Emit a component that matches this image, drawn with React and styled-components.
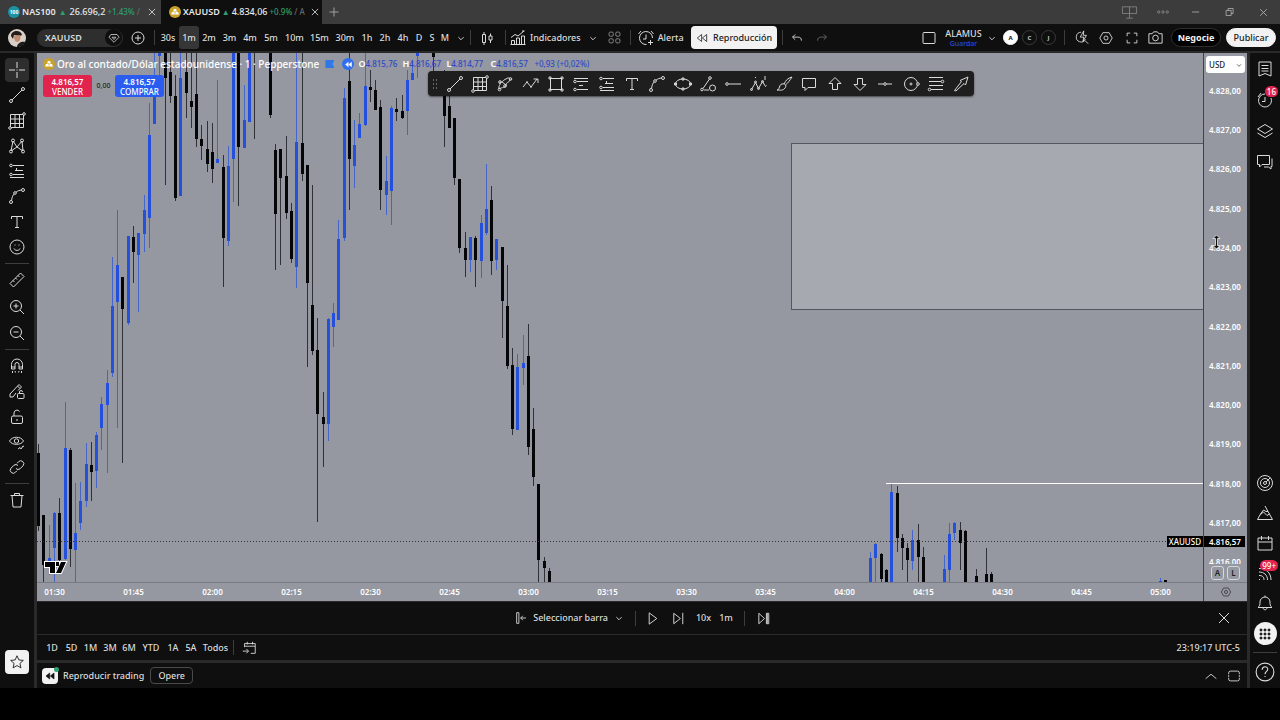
import React from 'react';
import styled, { createGlobalStyle, css } from 'styled-components';

const GlobalStyle = createGlobalStyle`
    * {
        box-sizing: border-box;
    }
    body {
        margin: 0;
        background: #000;
        color: #dbdbdb;
        font: 500 9px/12px "Noto Sans", "Open Sans", sans-serif;
    }
    button, select {
        margin: 0;
        padding: 0;
        border: 0;
        background: none;
        color: inherit;
        font: inherit;
    }
`;

const ICONS = {
    cross: <path d="M9 1v6M9 11v6M1 9h6M11 9h6M8.5 9h1" />,
    line: <><circle cx="3" cy="15" r="1.5" /><circle cx="15" cy="3" r="1.5" /><path d="M4 14L14 4" /></>,
    gann: <><path d="M2.500 2.500h13v13h-13zM7 2.500v13M11.500 2.500v13M2.500 7h13M2.500 11.500h13" /><circle cx="2" cy="16" r="1.300" fill="#0f0f0f" /><circle cx="16" cy="2" r="1.300" fill="#0f0f0f" /></>,
    xabcd: <><path d="M3 14L5 4l4 6 5-6 1 10-6-4-6 4z" /><circle cx="3" cy="14.500" r="1.500" /><circle cx="5" cy="3.500" r="1.500" /><circle cx="14" cy="3.500" r="1.500" /><circle cx="15" cy="14.500" r="1.500" /></>,
    longPos: <><path d="M5 3.500h11M5 12.500h11M2 15.500h14M8.500 8.500V6M7 8.500h8" /><circle cx="3" cy="3.500" r="1.300" /><circle cx="3" cy="12.500" r="1.300" /></>,
    shortPos: <><path d="M2 3.500h14M5 6.500h11M5 14.500h11M7 10.500h4" /><circle cx="3" cy="6.500" r="1.300" /><circle cx="3" cy="14.500" r="1.300" /></>,
    curve: <><circle cx="3" cy="15" r="1.500" /><circle cx="15" cy="3" r="1.500" /><circle cx="7" cy="6" r="1.300" /><path d="M3.500 13.500C4 10 5 8 6.200 7M8 5.200C10 3.700 11.500 3.300 13.500 3" /></>,
    text: <path d="M3.500 6V3.500h11V6M9 3.500v11M7 14.500h4" />,
    smile: <><circle cx="9" cy="9" r="7" /><path d="M6 10.500c1 2.500 5 2.500 6 0M6.500 7h1M10.500 7h1" /></>,
    ruler: <path d="M2 12.500L12.500 2 16 5.500 5.500 16zM5 9.500l1.500 1.500M7.500 7l1.500 1.500M10 4.500L11.500 6" />,
    zoomIn: <><circle cx="8" cy="8" r="5.500" /><path d="M12 12l4 4M8 5.500v5M5.500 8h5" /></>,
    zoomOut: <><circle cx="8" cy="8" r="5.500" /><path d="M12 12l4 4M5.500 8h5" /></>,
    magnet: <path d="M3.500 12V7.500a5.500 5.500 0 0 1 11 0V12h-3.500V7.500a2 2 0 0 0-4 0V12zM3.500 10H7M11 10h3.500M4.500 14v2M13.500 14v2M7 14l.5 1.500M11 14l-.5 1.500" />,
    pencilLock: <><path d="M8 11l-3 4H2v-3L11 2.500 13.500 5 10 8.500M9.500 4L12 6.500M11.500 11.500V10a1.500 1.500 0 0 1 3 0" /><rect x="9.500" y="11.500" width="6.500" height="5" rx="1" /></>,
    lock: <><rect x="3.500" y="8" width="11" height="7.500" rx="1.500" /><path d="M6 8V5a3 3 0 0 1 5.500-1.500M9 11v2" /></>,
    eye: <><path d="M1.500 8C4 3 13 3 15.500 8 13 12.500 4 12.500 1.500 8z" /><circle cx="8.500" cy="8" r="2.200" /><path d="M10 16l2-1.500 1 1.500 2-3 1 .5" /></>,
    link: <path d="M8 10.500a3 3 0 0 0 4 .3l3-3a2.800 2.800 0 0 0-4.500-4L9 5.300M10 7.500a3 3 0 0 0-4-.3l-3 3a2.800 2.800 0 0 0 4.500 4L9 12.700" />,
    trash: <path d="M2.500 4.500h13M6.500 4.500v-2h5v2M4 4.500l1 11.500h8l1-11.500" />,
    star: <path d="M9 2l2.100 4.700 5 .5-3.800 3.400 1.100 5L9 13l-4.400 2.600 1.100-5L1.900 7.200l5-.5z" />,
    shape: <><path d="M3 14c-1-4 2-3 1-7 2 1 3-2 6-3 2-2 5-1 4 1-1 3-4 2-4 5s-4 2-7 4zM6 7l4 3" /><circle cx="3.500" cy="14.500" r="1.300" /><circle cx="4" cy="7" r="1.300" /><circle cx="14.500" cy="4" r="1.300" /><circle cx="9" cy="11" r="1.300" /></>,
    zigzag: <path d="M1 12l4-5 4 5 6-8M11.500 4H16v4M8 12h2M4 7h2" />,
    rect: <><rect x="3.500" y="3.500" width="11" height="11" /><path d="M2 2h2v2H2zM14 2h2v2h-2zM2 14h2v2H2zM14 14h2v2h-2z" /></>,
    ellipse: <><ellipse cx="9" cy="9" rx="7.500" ry="5" /><path d="M8 3h2v2H8zM8 13h2v2H8zM.500 8h2v2h-2zM15.500 8h2v2h-2z" /></>,
    lineShape: <><circle cx="3" cy="14.500" r="1.300" /><circle cx="11" cy="3" r="1.300" /><path d="M4 13.500L10.500 4M5 15h5" /><circle cx="13.500" cy="13" r="3" /></>,
    ray: <><circle cx="3" cy="9" r="1.300" /><path d="M4.500 9H17" /></>,
    elliott: <><path d="M1.500 14.500l4-7 3 6 4-7 3 5 1-1M5 2.500h1M14 2h2M14 4h2" /><circle cx="1.500" cy="14.500" r="1" /><circle cx="5.500" cy="7" r="1" /><circle cx="8.500" cy="13.500" r="1" /><circle cx="12.500" cy="6.500" r="1" /></>,
    brush: <path d="M2 15c3 0 2-6 5-6 3-1 5 2 3 4-2 3-5 2-8 2zM9 9c2-4 4-6 8-7-2 3-4 6-6.500 8" />,
    note: <path d="M2.500 3.500h13v9H8l-3 3v-3H2.500z" />,
    arrowUp: <path d="M9 2.500L3 8.500h3.500v6h5v-6H15z" />,
    arrowDown: <path d="M9 15.500L3 9.500h3.500v-6h5v6H15z" />,
    hline: <><path d="M2 9h5.500M10.500 9H16" /><circle cx="9" cy="9" r="1.300" /></>,
    target: <><circle cx="9" cy="9" r="6.500" /><circle cx="9" cy="9" r="1" /><circle cx="16" cy="9" r="1.300" fill="#1e1e1e" /></>,
    fib: <><path d="M2 2.500h14M2 6.500h12M2 10.500h14M4 14.500h12" /><circle cx="15.500" cy="6.500" r="1.300" /><circle cx="2.500" cy="14.500" r="1.300" /></>,
    arrow: <path d="M2.500 15.500l7-9-1.500-1L16 2l-2.500 8-1.500-1.500-8 7.500z" />,
    plusCircle: <><circle cx="9" cy="9" r="6" /><path d="M9 6v6M6 9h6" /></>,
    plus: <path d="M9 4.500v9M4.500 9h9" />,
    close: <path d="M5 5l8 8M13 5l-8 8" />,
    bigClose: <path d="M4 4l10 10M14 4L4 14" />,
    chevron: <path d="M6 8l3 3 3-3" />,
    chevronUp: <path d="M3 12l6-5 6 5" />,
    candles: <path d="M4.500 5.500h3v8h-3zM6 3v2.500M6 13.500V16M11 7h3v4h-3zM12.500 4.500V7M12.500 11v3" />,
    indicators: <path d="M2.500 15.500v-4h3v4M7.500 15.500V9h3v6.500M12.500 15.500V7h3v8.500M1.500 15.500h15M2 8.500l4-3 3 1.500 6-5M13 2h2.500" />,
    quad: <><rect x="2.500" y="2.500" width="5" height="5" rx="1.500" /><rect x="10.500" y="2.500" width="5" height="5" rx="1.500" /><rect x="2.500" y="10.500" width="5" height="5" rx="1.500" /><rect x="10.500" y="10.500" width="5" height="5" rx="1.500" /></>,
    alert: <path d="M15.500 9a6.500 6.500 0 1 0-6 6.500M9 5.500V10H6M1.500 5L4 2M14 2l2.500 3M13.500 11v5M11 13.500h5" />,
    rewind: <path d="M8.500 4.500v9L3 9zM15 4.500v9L9.500 9z" />,
    undo: <path d="M7 5L4 8l3 3M4 8h6c2.500 0 4 1 4 4" />,
    redo: <path d="M11 5l3 3-3 3M14 8H8c-2.500 0-4 1-4 4" />,
    square: <rect x="3" y="3.500" width="12" height="11" rx="1" />,
    quickFind: <path d="M8 2.500a5.500 5.500 0 1 0 5 8M12.500 12l3.500 3.500M11 1L7 8h4l-1 5 4-7h-3.500z" />,
    settings: <><path d="M5.500 3h7L16 9l-3.500 6h-7L2 9z" /><circle cx="9" cy="9" r="2.300" /></>,
    full: <path d="M3.500 7V3.500H7M11 3.500h3.500V7M14.500 11v3.500H11M7 14.500H3.500V11" />,
    camera: <><path d="M2 5h3.500L7 3h4l1.500 2H16v10H2z" /><circle cx="9" cy="9.500" r="3" /></>,
    gem: <path d="M5 4.500h8L15.500 8 9 14.500 2.500 8zM6.500 8L9 11l2.500-3z" />,
    news: <path d="M3 2h12v14l-6-2.500L3 16zM5.500 5.500h7M5.500 8.500h7M5.500 11h7" />,
    clock: <path d="M9 3a6.500 6.500 0 1 0 6 4M9 6v4.500H6M2 6l3-4" />,
    layers: <path d="M9 2.500l7.500 4.500L9 11.500 1.500 7zM1.500 11L9 15.500l7.500-4.500" />,
    chat: <path d="M1.500 2.500h12v9H6l-2.500 2.500v-2.500h-2zM16 5.500v8h-1v2.500L12.500 14H8" />,
    radar: <><circle cx="9" cy="9" r="7.500" /><circle cx="9" cy="9" r="4.500" /><circle cx="9" cy="9" r="1.500" /><path d="M10 8l4.500-4.500" /></>,
    pyramid: <path d="M9 2l3 5.500h-2L7.500 6 4.500 10 1.500 15.500h15L12 7.500M4.500 10.500L7.500 8l3.500 3.500 2.500-1.500" />,
    calendar: <path d="M2 4h14v12H2zM2 8h14M5.500 2v4M12.500 2v4" />,
    feed: <path d="M3 15.500h1M3 11.500c3 0 5 1 5 4.500M3 8c5 0 8.500 3 8.500 8M3 4.500c7 0 12 4 12 11.500" />,
    bell: <path d="M2 13.500c2-1.500 2-3 2-5.500a5 5 0 0 1 10 0c0 2.500 0 4 2 5.500zM7 13.500c0 3 4 3 4 0M9 1.500V3" />,
    apps: <path d="M3.500 3.500h2v2h-2zM8 3.500h2v2H8zM12.500 3.500h2v2h-2zM3.500 8h2v2h-2zM8 8h2v2H8zM12.500 8h2v2h-2zM3.500 12.500h2v2h-2zM8 12.500h2v2H8zM12.500 12.500h2v2h-2z" />,
    help: <><circle cx="9" cy="9" r="8" /><path d="M6.500 7c0-3.500 5-3.500 5-.5 0 2-2.500 2-2.500 4.500M9 12.500v1" /></>,
    selectBar: <path d="M3 3h2.500v12H3zM7.500 9h6M10 6.500L7.500 9l2.500 2.500" />,
    play: <path d="M5.500 3l8 6-8 6z" />,
    step: <path d="M4 3.500l7 5.500-7 5.500zM13.500 3v12" />,
    toEnd: <path d="M3 3.500L9 9l-6 5.500zM11 3.500h2.500v11H11zM12 4v10" />,
    goTo: <path d="M4 8V4h12v11h-5M4 7h12M7 2v3M13 2v3M2 12.500h6M6 10l2.500 2.500L6 15" />,
    monitor: <path d="M1.500 3h15v7h-15zM9 3v12M5.500 15h7" />,
    dots: <><circle cx="3.500" cy="9" r="1.500" /><circle cx="9" cy="9" r="1.500" /><circle cx="14.500" cy="9" r="1.500" /></>,
    minus: <path d="M4 9h9" />,
    restore: <path d="M4 7h6.500v6.500H4zM6.500 7V4.500H13V11h-2.500" />,
    expand: <path d="M3 7V5.500a2 2 0 0 1 2-2h8a2 2 0 0 1 2 2V7M3 11v1.500a2 2 0 0 0 2 2h8a2 2 0 0 0 2-2V11M3 8v2M15 8v2" />,
};

const Svg = styled.svg`
    display: block;
    flex: none;
    fill: ${({ $filled }) => ($filled ? 'currentColor' : 'none')};
    stroke: currentColor;
    stroke-width: 1;
`;

const Icon = ({ name, size = 18, filled }) => (
    <Svg width={size} height={size} viewBox="0 0 18 18" $filled={filled} aria-hidden="true">
        {ICONS[name]}
    </Svg>
);

const Page = styled.div`
    display: flex;
    flex-direction: column;
    min-height: 100vh;
    padding-bottom: 32px;
    background: #000;
`;

const TabBar = styled.header`
    display: flex;
    align-items: center;
    height: 24px;
    background: #3c3c3c;
`;

const Tab = styled.div`
    display: flex;
    align-items: center;
    gap: 2px;
    flex: none;
    width: 161px;
    height: 24px;
    padding: 0 1px 0 8px;
    white-space: nowrap;
    color: #e8e8e8;
    background: ${({ $active }) => ($active ? '#0f0f0f' : 'transparent')};
    button {
        margin-left: auto;
    }
`;

const Ticker = styled.strong`
    font-weight: 600;
`;

const Rise = styled.span`
    width: 10px;
    color: #2f9e72;
    font-size: 8px;
    text-align: center;
`;

const Change = styled.span`
    color: #2f9e72;
    font-size: 8px;
`;

const Faint = styled.span`
    color: #6a6a6a;
    font-size: 8px;
`;

const Coin = styled.span`
    display: grid;
    place-items: center;
    flex: none;
    width: 12px;
    height: 12px;
    border-radius: 50%;
    background: ${({ $color }) => $color};
    color: #fff;
    font-size: 5px;
    font-weight: 700;
`;

const WindowControls = styled.div`
    display: flex;
    align-items: center;
    margin-left: auto;
    color: #b5b5b5;
`;

const IconButton = styled.button`
    position: relative;
    display: grid;
    place-items: center;
    flex: none;
    width: ${({ $w = 18 }) => $w}px;
    height: ${({ $h = 24 }) => $h}px;
    border-radius: 4px;
    color: ${({ $color = 'inherit' }) => $color};
    background: ${({ $active }) => ($active ? '#2e2e2e' : 'transparent')};
`;

const Toolbar = styled.div`
    display: flex;
    align-items: center;
    height: 29px;
    padding: 0 4px 0 8px;
    border-bottom: 2px solid #2a2a2a;
    background: #0f0f0f;
    white-space: nowrap;
`;

const Avatar = styled.svg`
    width: 18px;
    height: 18px;
    margin-right: 11px;
    flex: none;
`;

const SymbolSearch = styled.button`
    display: flex;
    align-items: center;
    justify-content: space-between;
    width: 86px;
    height: 18px;
    padding: 0 1px 0 8px;
    border-radius: 9px;
    background: #2e2e2e;
    font-weight: 600;
`;

const GemBadge = styled.span`
    display: grid;
    place-items: center;
    width: 17px;
    height: 17px;
    border-radius: 50%;
    background: #0f0f0f;
`;

const Divider = styled.span`
    flex: none;
    width: 1px;
    height: 15px;
    margin: 0 ${({ $gap = 3 }) => $gap}px;
    background: #3d3d3d;
`;

const Interval = styled.button`
    width: ${({ $w }) => $w}px;
    height: 23px;
    border-radius: 3px;
    background: ${({ $active }) => ($active ? '#363636' : 'transparent')};
`;

const ToolButton = styled.button`
    display: flex;
    align-items: center;
    gap: 3px;
    height: 22px;
`;

const ReplayButton = styled(ToolButton)`
    justify-content: center;
    gap: 4px;
    width: 86px;
    height: 23px;
    margin-left: 7px;
    border-radius: 4px;
    background: #f2f2f2;
    color: #1a1a1a;
`;

const ToolbarEnd = styled.div`
    display: flex;
    align-items: center;
    margin-left: auto;
`;

const Layout = styled.div`
    width: 39px;
    margin-left: 6px;
    line-height: 11px;
    text-align: center;
    small {
        display: block;
        color: #2448e0;
        font-size: 7px;
        line-height: 9px;
    }
`;

const Initial = styled.button`
    width: 15px;
    height: 15px;
    margin: 0 2px;
    border: 1px solid ${({ $active }) => ($active ? '#fff' : '#3a3a3a')};
    border-radius: 50%;
    background: ${({ $active }) => ($active ? '#fff' : 'transparent')};
    color: ${({ $active }) => ($active ? '#111' : '#ccc')};
    font-size: 6px;
    line-height: 8px;
    font-weight: 700;
`;

const Pill = styled.button`
    width: 50px;
    height: 19px;
    margin-left: 5px;
    border: 1px solid ${({ $light }) => ($light ? '#f2f2f2' : '#2e2e2e')};
    border-radius: 10px;
    background: ${({ $light }) => ($light ? '#f2f2f2' : '#000')};
    color: ${({ $light }) => ($light ? '#222' : '#f2f2f2')};
    font-weight: ${({ $light }) => ($light ? 500 : 700)};
`;

const Body = styled.div`
    display: flex;
    flex: 1;
`;

const rail = css`
    display: flex;
    flex-direction: column;
    align-items: center;
    flex: none;
    background: #0f0f0f;
`;

const LeftRail = styled.nav`
    ${rail}
    width: 37px;
    padding: 5px 0 14px;
    border-right: 3px solid #2a2a2a;
`;

const RightRail = styled.nav`
    ${rail}
    width: 33px;
    padding: 1px 0;
    border-left: 3px solid #2a2a2a;
`;

const ToolGroup = styled.div`
    display: flex;
    flex-direction: column;
    justify-content: space-between;
    flex: none;
    height: ${({ $height }) => $height}px;
`;

const RailRule = styled.hr`
    flex: none;
    width: 24px;
    height: 1px;
    margin: 4px 0;
    border: 0;
    background: #3d3d3d;
`;

const StarButton = styled(IconButton)`
    margin-top: auto;
    background: #f2f2f2;
    color: #1a1a1a;
`;

const Spacer = styled.div`
    flex: 1;
`;

const RoundButton = styled(IconButton)`
    width: 23px;
    height: 23px;
    margin: 4px 0 3px;
    border-radius: 50%;
    background: #f2f2f2;
    color: #1a1a1a;
`;

const Badge = styled.span`
    position: absolute;
    top: 2px;
    right: 2px;
    padding: 0 2px;
    border-radius: 6px;
    background: #e0244e;
    color: #fff;
    font-size: 8px;
    line-height: 11px;
`;

const Main = styled.main`
    display: flex;
    flex-direction: column;
    flex: 1;
    min-width: 0;
`;

const ChartGrid = styled.section`
    display: grid;
    grid-template-columns: minmax(0, 1fr) 44px;
    grid-template-rows: minmax(529px, 1fr) 19px;
    flex: 1;
    background: #9598a1;
    color: #fff;
`;

const Pane = styled.div`
    position: relative;
    overflow: hidden;
`;

const ChartSvg = styled.svg`
    position: absolute;
    display: block;
    width: 100%;
    height: 100%;
    shape-rendering: crispEdges;
`;

const Legend = styled.div`
    position: relative;
    display: flex;
    align-items: center;
    gap: 2px;
    height: 14px;
    margin: 4px 0 0 6px;
    white-space: nowrap;
    font-size: 10px;
`;

const Flag = styled.span`
    width: 9px;
    height: 8px;
    margin: 0 6px 0 4px;
    background: #2f78e8;
    clip-path: polygon(0 0, 100% 0, 80% 50%, 100% 100%, 0 100%);
`;

const ReplayDot = styled.span`
    display: grid;
    place-items: center;
    width: 12px;
    height: 12px;
    margin-right: 2px;
    border-radius: 50%;
    background: #2f6ff0;
`;

const Ohlc = styled.span`
    width: 42px;
    color: #2f49c8;
    font-size: 8px;
    b {
        color: #fff;
        font-size: 9px;
        font-weight: 600;
    }
`;

const Orders = styled.div`
    position: relative;
    display: flex;
    align-items: center;
    margin: 4px 0 0 6px;
    color: #222;
    font-size: 7px;
`;

const OrderButton = styled.button`
    width: 49px;
    height: 22px;
    border-radius: 3px;
    background: ${({ $color }) => $color};
    color: #fff;
    font-size: 8px;
    font-weight: 500;
    line-height: 9px;
    b {
        display: block;
        font-weight: 600;
        font-size: 8px;
        line-height: 10px;
    }
`;

const Spread = styled.span`
    width: 23px;
    text-align: center;
`;

const DrawBar = styled.div`
    position: absolute;
    top: 18px;
    left: 391px;
    display: flex;
    width: 546px;
    height: 25px;
    border-radius: 4px;
    background: #1e1e1e;
    color: #dbdbdb;
    box-shadow: 0 1px 2px #0008;
    button {
        flex: 1;
    }
`;

const Handle = styled.span`
    flex: none;
    width: 6px;
    height: 11px;
    margin: 7px 4px;
    background: radial-gradient(circle, #666 1px, transparent 1px) 0 0 / 3px 4px;
`;

const Tag = styled.span`
    position: absolute;
    top: 483px;
    right: 0;
    padding: 0 2px;
    background: #000;
    color: #fff;
    font-size: 8px;
    font-weight: 500;
    line-height: 11px;
`;

const PriceTag = styled(Tag)`
    right: auto;
    left: 0;
    padding: 0 4px 0 5px;
    font-weight: 600;
`;

const Logo = styled.svg`
    position: absolute;
    left: 7px;
    bottom: 7px;
`;

const PriceAxis = styled.div`
    position: relative;
    display: flex;
    flex-direction: column;
    overflow: hidden;
    padding-top: 18px;
    border-left: 1px solid #3f4148;
    font-size: 8px;
    font-weight: 600;
`;

const Price = styled.span`
    display: flex;
    flex: 1;
    align-items: center;
    padding-left: 5px;
`;

const Currency = styled.select`
    position: absolute;
    top: 3px;
    left: 2px;
    width: 39px;
    height: 17px;
    padding-left: 3px;
    border-radius: 3px;
    appearance: none;
    background: #fff;
    color: #222;
    font-size: 8px;
    font-weight: 500;
`;

const CurrencyArrow = styled.span`
    position: absolute;
    top: 6px;
    right: 2px;
    color: #222;
`;

const ScaleModes = styled.div`
    position: absolute;
    right: 4px;
    bottom: 0;
    display: flex;
    gap: 3px;
    padding: 2px 3px;
    background: #9598a1;
    button {
        width: 13px;
        height: 14px;
        border: 1px solid #d5d7dc;
        border-radius: 3px;
        color: #222;
        line-height: 10px;
    }
`;

const Cursor = styled.svg`
    position: absolute;
    top: 181px;
    left: 8px;
`;

const TimeAxis = styled.div`
    display: flex;
    align-items: center;
    overflow: hidden;
    border-top: 1px solid #787b84;
    font-size: 8px;
    font-weight: 600;
    span {
        flex: none;
        width: 79px;
        text-align: center;
    }
    span:first-child {
        margin-left: -22px;
    }
`;

const AxisCorner = styled.div`
    display: grid;
    place-items: center;
    border-top: 1px solid #787b84;
    border-left: 1px solid #3f4148;
    color: #222;
`;

const Bar = styled.div`
    display: flex;
    align-items: center;
    flex: none;
    height: ${({ $height }) => $height}px;
    padding: 0 14px 0 ${({ $left = 5 }) => $left}px;
    background: #0f0f0f;
`;

const ReplayBar = styled(Bar)`
    border-top: 1px solid #2a2a2a;
    border-bottom: 1px solid #2a2a2a;
`;

const ReplayControls = styled.div`
    display: flex;
    align-items: center;
    flex: 1;
    justify-content: center;
    gap: 8px;
`;

const RangeBar = styled(Bar)`
    border-bottom: 3px solid #2a2a2a;
`;

const Range = styled.button`
    width: ${({ $w }) => $w}px;
    height: 20px;
`;

const Clock = styled.span`
    margin-left: auto;
    margin-right: -7px;
`;

const Trading = styled.button`
    display: flex;
    align-items: center;
    gap: 5px;
`;

const TradingIcon = styled.span`
    position: relative;
    display: grid;
    place-items: center;
    width: 16px;
    height: 16px;
    border-radius: 4px;
    background: #f2f2f2;
    color: #111;
    &::after {
        content: "";
        position: absolute;
        top: -1px;
        right: -1px;
        width: 5px;
        height: 5px;
        border-radius: 50%;
        background: #2f9e72;
    }
`;

const Operate = styled.button`
    width: 43px;
    height: 17px;
    margin-left: 6px;
    border: 1px solid #4a4a4a;
    border-radius: 4px;
`;

const Push = styled.div`
    display: flex;
    gap: 5px;
    margin-left: auto;
    margin-right: -10px;
`;

// bar index from 01:30, direction, high, body top, body bottom, low
const CANDLES = [
    [-3, 'd', 444, 453, 526, 531], [-2, 'd', 515, 515, 565, 583], [-1, 'u', 525, 558, 562, 575],
    [0, 'u', 512, 513, 548, 583], [1, 'd', 498, 513, 560, 565], [2, 'u', 402, 448, 559, 560],
    [3, 'd', 448, 450, 549, 567], [4, 'u', 483, 533, 550, 583], [5, 'u', 482, 501, 523, 530],
    [6, 'u', 443, 464, 501, 507], [7, 'd', 442, 465, 472, 501], [8, 'u', 432, 435, 471, 488],
    [9, 'u', 397, 404, 428, 450], [10, 'u', 370, 383, 405, 473], [11, 'u', 257, 306, 373, 377],
    [12, 'u', 210, 265, 302, 428], [13, 'd', 277, 277, 309, 463], [14, 'u', 236, 236, 323, 325],
    [15, 'd', 226, 237, 252, 283], [16, 'u', 233, 233, 255, 312], [17, 'u', 195, 210, 234, 252],
    [18, 'u', 103, 135, 218, 248], [19, 'u', 40, 96, 124, 124], [20, 'u', 40, 40, 56, 90],
    [21, 'd', 40, 40, 78, 185], [22, 'd', 53, 72, 96, 103], [23, 'd', 75, 96, 198, 201],
    [24, 'u', 53, 78, 196, 196], [25, 'd', 53, 72, 93, 118], [26, 'd', 53, 101, 107, 128],
    [27, 'd', 53, 94, 139, 147], [28, 'd', 125, 139, 146, 160], [29, 'd', 121, 149, 164, 172],
    [30, 'd', 123, 152, 169, 183], [31, 'u', 80, 159, 163, 163], [32, 'd', 155, 167, 238, 287],
    [33, 'u', 146, 166, 241, 246], [34, 'u', 40, 40, 159, 202], [35, 'd', 40, 40, 147, 206],
    [36, 'u', 85, 120, 148, 148], [37, 'u', 40, 40, 122, 122], [38, 'd', 40, 40, 50, 139],
    [41, 'd', 40, 40, 115, 118], [42, 'd', 144, 150, 214, 270], [43, 'd', 149, 149, 178, 265],
    [44, 'd', 136, 176, 213, 219], [45, 'd', 203, 211, 259, 263], [46, 'u', 53, 142, 267, 288],
    [47, 'd', 53, 143, 174, 181], [48, 'd', 165, 165, 283, 367], [49, 'd', 185, 305, 351, 355],
    [50, 'd', 318, 350, 414, 522], [51, 'd', 392, 417, 424, 467], [52, 'u', 318, 319, 424, 441],
    [53, 'u', 303, 313, 327, 347], [54, 'u', 220, 239, 320, 320], [55, 'u', 88, 98, 238, 241],
    [56, 'd', 53, 81, 159, 210], [57, 'u', 120, 145, 166, 188], [58, 'u', 113, 124, 138, 138],
    [59, 'u', 53, 86, 125, 126], [60, 'd', 70, 87, 90, 102], [61, 'd', 80, 90, 110, 110],
    [62, 'd', 100, 107, 190, 210], [63, 'u', 156, 181, 195, 215], [64, 'u', 106, 108, 191, 225],
    [65, 'd', 98, 109, 112, 121], [66, 'd', 95, 111, 118, 119], [67, 'u', 70, 80, 111, 135],
    [68, 'u', 60, 73, 80, 80], [69, 'u', 40, 40, 56, 78], [72, 'd', 40, 40, 57, 75],
    [74, 'd', 70, 80, 116, 147], [75, 'd', 95, 106, 128, 128], [76, 'd', 118, 118, 178, 185],
    [77, 'd', 179, 179, 248, 253], [78, 'd', 232, 248, 260, 277], [79, 'u', 237, 237, 260, 272],
    [80, 'd', 236, 238, 260, 287], [81, 'u', 215, 223, 261, 278], [82, 'u', 164, 209, 233, 235],
    [83, 'd', 186, 200, 261, 275], [84, 'u', 239, 239, 260, 270], [85, 'd', 247, 247, 301, 338],
    [86, 'd', 265, 306, 366, 369], [87, 'd', 348, 365, 429, 435], [88, 'u', 354, 367, 430, 430],
    [89, 'u', 335, 363, 368, 385], [90, 'd', 324, 356, 447, 455], [91, 'd', 408, 429, 477, 486],
    [92, 'd', 484, 484, 560, 583], [93, 'd', 557, 561, 568, 583], [94, 'd', 568, 571, 583, 583],
    [155, 'u', 552, 558, 583, 583], [156, 'u', 543, 544, 558, 583], [157, 'd', 553, 554, 579, 583],
    [158, 'd', 569, 570, 583, 583], [159, 'u', 484, 492, 583, 583], [160, 'd', 486, 493, 538, 552],
    [161, 'd', 534, 538, 548, 570], [162, 'd', 543, 548, 560, 583], [163, 'u', 530, 540, 561, 570],
    [164, 'd', 524, 540, 557, 583], [165, 'd', 547, 557, 583, 583], [169, 'u', 555, 569, 583, 583],
    [170, 'u', 523, 534, 570, 583], [171, 'u', 522, 523, 533, 540], [172, 'd', 522, 530, 543, 570],
    [173, 'd', 530, 531, 583, 583], [175, 'd', 569, 576, 583, 583], [177, 'd', 548, 574, 583, 583],
    [178, 'd', 572, 574, 583, 583], [210, 'u', 578, 581, 583, 583], [211, 'd', 580, 580, 583, 583],
];

const PITCH = 5.266;
const COLORS = { u: '#2450dc', d: '#050608' };

const Candle = ({ bar: [index, dir, high, top, bottom, low] }) => {
    const x = Math.round(54 + index * PITCH);
    return (
        <g fill={COLORS[dir]}>
            <rect x={x} y={high} width="1" height={low - high} opacity="0.7" />
            <rect x={x - 1} y={top} width="3" height={bottom - top} />
        </g>
    );
};

const INTERVALS = [
    ['30s', 22], ['1m', 20], ['2m', 20], ['3m', 21], ['4m', 20], ['5m', 22], ['10m', 25], ['15m', 25],
    ['30m', 26], ['1h', 18], ['2h', 18], ['4h', 18], ['D', 14], ['S', 12], ['M', 14],
];

const RANGES = [
    ['1D', 20], ['5D', 19], ['1M', 19], ['3M', 20], ['6M', 18], ['YTD', 26], ['1A', 18], ['5A', 18], ['Todos', 31],
];

const TOOL_GROUPS = [
    [201, ['cross', 'line', 'gann', 'xabcd', 'longPos', 'curve', 'text', 'smile']],
    [77, ['ruler', 'zoomIn', 'zoomOut']],
    [125, ['magnet', 'pencilLock', 'lock', 'eye', 'link']],
    [26, ['trash']],
];

const DRAW_TOOLS = [
    'line', 'gann', 'shape', 'zigzag', 'rect', 'shortPos', 'longPos', 'text', 'curve', 'ellipse', 'lineShape',
    'ray', 'elliott', 'brush', 'note', 'arrowUp', 'arrowDown', 'hline', 'target', 'fib', 'arrow',
];

const PRICES = [28, 27, 26, 25, 24, 23, 22, 21, 20, 19, 18, 17, 16];

const TIMES = [
    '01:30', '01:45', '02:00', '02:15', '02:30', '02:45', '03:00', '03:15',
    '03:30', '03:45', '04:00', '04:15', '04:30', '04:45', '05:00',
];

const GoldCoin = () => (
    <Coin $color="#c9a227">
        <svg width="8" height="6" viewBox="0 0 8 6" fill="#fff">
            <path d="M3 0h2l1 2.500H2zM1 3h2.500l.5 2.500H0zM4.500 3H7l1 2.500H4.200z" />
        </svg>
    </Coin>
);

const Tabs = () => (
    <TabBar>
        <Tab>
            <Coin $color="#1b93a5">100</Coin>
            <Ticker>NAS100</Ticker>
            <Rise>▲</Rise>
            <span>26.696,2</span>
            <Change>+1.43%</Change>
            <Faint>/</Faint>
            <IconButton $w={16} aria-label="Cerrar NAS100"><Icon name="close" size={14} /></IconButton>
        </Tab>
        <Tab $active>
            <GoldCoin />
            <Ticker>XAUUSD</Ticker>
            <Rise>▲</Rise>
            <span>4.834,06</span>
            <Change>+0.9%</Change>
            <Faint>/ A</Faint>
            <IconButton $w={16} aria-label="Cerrar XAUUSD"><Icon name="close" size={14} /></IconButton>
        </Tab>
        <IconButton $w={24} $color="#a0a0a0" aria-label="Nueva pestaña"><Icon name="plus" /></IconButton>
        <WindowControls>
            <IconButton $w={32} $color="#808080" aria-label="Pantallas"><Icon name="monitor" size={17} /></IconButton>
            <Divider $gap={1} />
            <IconButton $w={30} $color="#909090" aria-label="Más"><Icon name="dots" size={14} /></IconButton>
            <IconButton $w={36} aria-label="Minimizar"><Icon name="minus" size={14} /></IconButton>
            <IconButton $w={32} aria-label="Restaurar"><Icon name="restore" size={14} /></IconButton>
            <IconButton $w={34} aria-label="Cerrar"><Icon name="close" size={15} /></IconButton>
        </WindowControls>
    </TabBar>
);

const TopToolbar = () => (
    <Toolbar>
        <Avatar viewBox="0 0 18 18">
            <circle cx="9" cy="9" r="9" fill="#d8cfc6" />
            <path d="M3 7c0-6 10-7 11-1l-2 1-6-1-1 4z" fill="#241c19" />
            <path d="M6 7l6-1c1 3 0 7-3 7-2 0-3-3-3-6z" fill="#c08d70" />
            <path d="M9 18c0-4 5-6 8-5-1 3-4 5-8 5z" fill="#1c1c1f" />
        </Avatar>
        <SymbolSearch>
            XAUUSD
            <GemBadge><Icon name="gem" size={14} /></GemBadge>
        </SymbolSearch>
        <IconButton $w={29} aria-label="Añadir símbolo"><Icon name="plusCircle" /></IconButton>
        <Divider $gap={2} />
        {INTERVALS.map(([label, width]) => (
            <Interval key={label} $w={width} $active={label === '1m'}>{label}</Interval>
        ))}
        <IconButton $w={17} aria-label="Más intervalos"><Icon name="chevron" size={16} /></IconButton>
        <Divider $gap={1} />
        <IconButton $w={30} aria-label="Velas"><Icon name="candles" /></IconButton>
        <Divider $gap={3} />
        <ToolButton><Icon name="indicators" />Indicadores</ToolButton>
        <IconButton $w={25} aria-label="Más indicadores"><Icon name="chevron" size={16} /></IconButton>
        <IconButton $color="#999" aria-label="Plantillas"><Icon name="quad" size={15} /></IconButton>
        <Divider $gap={6} />
        <ToolButton><Icon name="alert" />Alerta</ToolButton>
        <ReplayButton><Icon name="rewind" size={14} />Reproducción</ReplayButton>
        <Divider $gap={5} />
        <IconButton aria-label="Deshacer"><Icon name="undo" size={16} /></IconButton>
        <IconButton $w={32} $color="#6a6a6a" aria-label="Rehacer"><Icon name="redo" size={16} /></IconButton>
        <ToolbarEnd>
            <IconButton aria-label="Diseño"><Icon name="square" /></IconButton>
            <Layout>ALAMUS<small>Guardar</small></Layout>
            <IconButton aria-label="Diseños"><Icon name="chevron" size={16} /></IconButton>
            <Initial $active>A</Initial>
            <Initial>C</Initial>
            <Initial>J</Initial>
            <Divider $gap={6} />
            <IconButton $w={21} aria-label="Búsqueda rápida"><Icon name="quickFind" size={16} /></IconButton>
            <IconButton $w={27} aria-label="Configuración"><Icon name="settings" size={16} /></IconButton>
            <IconButton $w={25} aria-label="Pantalla completa"><Icon name="full" size={16} /></IconButton>
            <IconButton $w={22} aria-label="Captura"><Icon name="camera" size={17} /></IconButton>
            <Pill>Negocie</Pill>
            <Pill $light>Publicar</Pill>
        </ToolbarEnd>
    </Toolbar>
);

const Chart = () => (
    <Pane>
        <ChartSvg>
            <g transform="translate(-37 -53)">
                <rect x="791" y="143" width="100%" height="166" fill="#a6a9af" stroke="#55575e" />
                {CANDLES.map(bar => <Candle key={bar[0]} bar={bar} />)}
                <rect x="886" y="483" width="100%" height="1" fill="#fff" />
            </g>
            <line x1="0" x2="100%" y1="488.5" y2="488.5" stroke="#33353b" strokeDasharray="1 2" />
        </ChartSvg>
        <Legend>
            <GoldCoin />
            <span>Oro al contado/Dólar estadounidense · 1 · Pepperstone</span>
            <Flag />
            <ReplayDot><Icon name="rewind" size={9} filled /></ReplayDot>
            <Ohlc><b>O</b>4.815,76</Ohlc>
            <Ohlc><b>H</b>4.816,67</Ohlc>
            <Ohlc><b>L</b>4.814,77</Ohlc>
            <Ohlc><b>C</b>4.816,57</Ohlc>
            <Ohlc>+0,93 (+0,02%)</Ohlc>
        </Legend>
        <Orders>
            <OrderButton $color="#e0244e"><b>4.816,57</b>VENDER</OrderButton>
            <Spread>0,00</Spread>
            <OrderButton $color="#2a5cf0"><b>4.816,57</b>COMPRAR</OrderButton>
        </Orders>
        <DrawBar>
            <Handle />
            {DRAW_TOOLS.map(name => (
                <IconButton key={name} $h={25} aria-label={name}><Icon name={name} /></IconButton>
            ))}
        </DrawBar>
        <Tag>XAUUSD</Tag>
        <Logo width="24" height="15" viewBox="0 0 24 15">
            <path d="M1 2h10v11H6V7H1zM12 2h3v4h-3zM17 2h5l-5 11h-5z" fill="#000" stroke="#fff" strokeWidth="2" paintOrder="stroke" />
        </Logo>
    </Pane>
);

const Scale = () => (
    <PriceAxis>
        {PRICES.map(n => <Price key={n}>{`4.8${n},00`}</Price>)}
        <Currency aria-label="Moneda"><option>USD</option></Currency>
        <CurrencyArrow><Icon name="chevron" size={12} /></CurrencyArrow>
        <Cursor width="9" height="16" viewBox="0 0 9 16">
            <path d="M4.500 1L8 4.500H5.500v7H8L4.500 15 1 11.500h2.500v-7H1z" fill="#111" stroke="#fff" strokeWidth=".7" />
        </Cursor>
        <PriceTag>4.816,57</PriceTag>
        <ScaleModes>
            <button type="button">A</button>
            <button type="button">L</button>
        </ScaleModes>
    </PriceAxis>
);

const App = () => (
    <>
        <GlobalStyle />
        <Page>
            <Tabs />
            <TopToolbar />
            <Body>
                <LeftRail>
                    {TOOL_GROUPS.map(([height, tools], i) => (
                        <React.Fragment key={height}>
                            {i > 0 && <RailRule />}
                            <ToolGroup $height={height}>
                                {tools.map(name => (
                                    <IconButton key={name} $w={24} $h={24} $active={name === 'cross'} aria-label={name}>
                                        <Icon name={name} />
                                    </IconButton>
                                ))}
                            </ToolGroup>
                        </React.Fragment>
                    ))}
                    <StarButton $w={24} aria-label="Favoritos"><Icon name="star" size={16} /></StarButton>
                </LeftRail>
                <Main>
                    <ChartGrid>
                        <Chart />
                        <Scale />
                        <TimeAxis>{TIMES.map(time => <span key={time}>{time}</span>)}</TimeAxis>
                        <AxisCorner><Icon name="settings" size={12} /></AxisCorner>
                    </ChartGrid>
                    <ReplayBar $height={34} $left={36}>
                        <ReplayControls>
                            <ToolButton><Icon name="selectBar" size={16} />Seleccionar barra<Icon name="chevron" size={16} /></ToolButton>
                            <Divider $gap={0} />
                            <IconButton aria-label="Reproducir"><Icon name="play" size={17} /></IconButton>
                            <IconButton aria-label="Avanzar"><Icon name="step" size={17} /></IconButton>
                            <button type="button">10x</button>
                            <button type="button">1m</button>
                            <Divider />
                            <IconButton aria-label="Ir al final"><Icon name="toEnd" size={17} /></IconButton>
                        </ReplayControls>
                        <IconButton aria-label="Salir"><Icon name="bigClose" /></IconButton>
                    </ReplayBar>
                    <RangeBar $height={28}>
                        {RANGES.map(([label, width]) => <Range key={label} $w={width}>{label}</Range>)}
                        <Divider $gap={2} />
                        <IconButton $w={26} aria-label="Ir a"><Icon name="goTo" size={16} /></IconButton>
                        <Clock>23:19:17 UTC-5</Clock>
                    </RangeBar>
                    <Bar $height={25}>
                        <Trading>
                            <TradingIcon><Icon name="rewind" size={12} filled /></TradingIcon>
                            Reproducir trading
                        </Trading>
                        <Operate>Opere</Operate>
                        <Push>
                            <IconButton aria-label="Abrir panel"><Icon name="chevronUp" size={16} /></IconButton>
                            <IconButton aria-label="Maximizar"><Icon name="expand" size={16} /></IconButton>
                        </Push>
                    </Bar>
                </Main>
                <RightRail>
                    <IconButton $w={30} $h={30} aria-label="Lista"><Icon name="news" /></IconButton>
                    <IconButton $w={30} $h={31} aria-label="Alertas"><Icon name="clock" /><Badge>16</Badge></IconButton>
                    <IconButton $w={30} $h={31} aria-label="Objetos"><Icon name="layers" /></IconButton>
                    <IconButton $w={30} $h={31} aria-label="Chat"><Icon name="chat" /></IconButton>
                    <Spacer />
                    {['radar', 'pyramid', 'calendar'].map(name => (
                        <IconButton key={name} $w={30} $h={30} aria-label={name}><Icon name={name} /></IconButton>
                    ))}
                    <IconButton $w={30} $h={30} aria-label="Ideas"><Icon name="feed" /><Badge>99+</Badge></IconButton>
                    <IconButton $w={30} $h={30} aria-label="Notificaciones"><Icon name="bell" /></IconButton>
                    <RoundButton aria-label="Productos"><Icon name="apps" size={16} filled /></RoundButton>
                    <RailRule />
                    <IconButton $w={30} $h={30} aria-label="Ayuda"><Icon name="help" size={20} /></IconButton>
                </RightRail>
            </Body>
        </Page>
    </>
);

export default App;
